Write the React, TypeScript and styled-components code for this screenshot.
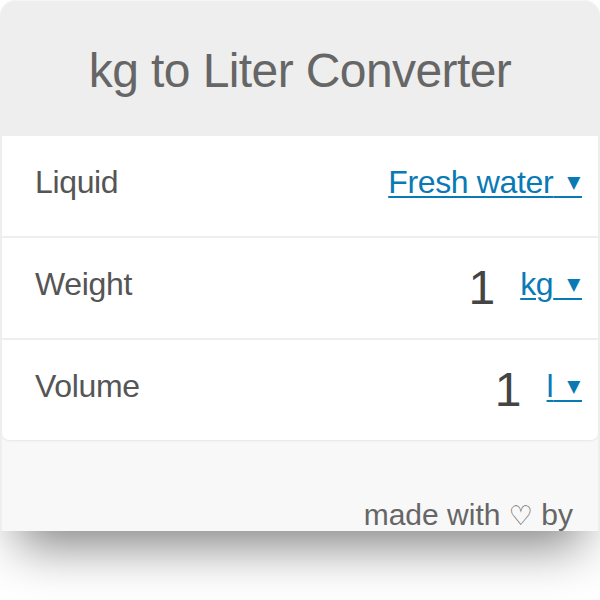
import React from 'react'
import styled, { createGlobalStyle } from 'styled-components'

const GlobalStyle = createGlobalStyle`
  html, body {
    margin: 0;
    padding: 0;
    background: #ffffff;
  }
  body {
    font-family: "Liberation Sans", Arial, Helvetica, sans-serif;
  }
`

const Page = styled.div`
  width: 600px;
  height: 600px;
  overflow: hidden;
  background: #ffffff;
`

const Widget = styled.div`
  width: 600px;
  height: 531px;
  box-sizing: border-box;
  overflow: hidden;
  display: flex;
  flex-direction: column;
  background: #f8f8f8;
  border: solid #eeeeee;
  border-width: 0 2px;
  border-radius: 16px 16px 0 0;
  box-shadow: 0 32px 48px -18px rgba(0, 0, 0, 0.5);
`

const Header = styled.div`
  height: 136px;
  flex: 0 0 136px;
  margin: 0 -2px;
  display: flex;
  align-items: center;
  justify-content: center;
  padding-top: 5px;
  box-sizing: border-box;
  background: #eeeeee;
  border-radius: 16px 16px 0 0;
  box-shadow: inset 0 1px 0 #f6f6f6;
`

const Title = styled.h1`
  margin: 0;
  font-size: 48px;
  line-height: 48px;
  font-weight: 400;
  letter-spacing: -0.6px;
  color: #666666;
`

const Card = styled.div`
  background: #ffffff;
  border-radius: 0 0 7px 7px;
  box-shadow: 0 1px 2px rgba(0, 0, 0, 0.08);
`

const Row = styled.div<{ $last?: boolean }>`
  height: 92px;
  display: flex;
  align-items: center;
  justify-content: space-between;
  padding: 0 16px 8px 33px;
  border-bottom: ${({ $last }) => ($last ? 'none' : '2px solid #eeeeee')};
`

const Label = styled.span`
  font-size: 32px;
  letter-spacing: -0.35px;
  color: #555555;
`

const Value = styled.div`
  display: flex;
  align-items: center;
`

const Amount = styled.span`
  font-size: 48px;
  color: #444444;
  margin-right: 25px;
  margin-top: 6px;
`

const Select = styled.span`
  font-size: 32px;
  letter-spacing: -0.35px;
  color: #0a7ab5;
  text-decoration: underline;
  text-decoration-thickness: 2px;
  text-underline-offset: 3px;
  cursor: pointer;
`

const Caret = styled.span`
  font-family: "DejaVu Sans", sans-serif;
  font-size: 17px;
  letter-spacing: 1.6px;
  vertical-align: 0.32em;
`

const Footer = styled.div`
  flex: 1;
  display: flex;
  align-items: flex-end;
  justify-content: flex-end;
  padding: 0 25px 0 0;
`

const Credit = styled.span`
  font-size: 30px;
  line-height: 34px;
  color: #666666;
  margin-bottom: -2px;
`

const Heart = styled.span`
  font-family: "DejaVu Sans", sans-serif;
  font-size: 27px;
`

export default function App() {
  return (
    <>
      <GlobalStyle />
      <Page>
        <Widget>
          <Header>
            <Title>kg to Liter Converter</Title>
          </Header>
          <Card>
            <Row>
              <Label>Liquid</Label>
              <Select>
                Fresh water
                <Caret>{'\u00a0\u00a0▼'}</Caret>
              </Select>
            </Row>
            <Row>
              <Label>Weight</Label>
              <Value>
                <Amount>1</Amount>
                <Select>
                  kg
                  <Caret>{'\u00a0\u00a0▼'}</Caret>
                </Select>
              </Value>
            </Row>
            <Row $last>
              <Label>Volume</Label>
              <Value>
                <Amount>1</Amount>
                <Select>
                  l<Caret>{'\u00a0\u00a0▼'}</Caret>
                </Select>
              </Value>
            </Row>
          </Card>
          <Footer>
            <Credit>
              made with <Heart>♡</Heart> by
            </Credit>
          </Footer>
        </Widget>
      </Page>
    </>
  )
}
